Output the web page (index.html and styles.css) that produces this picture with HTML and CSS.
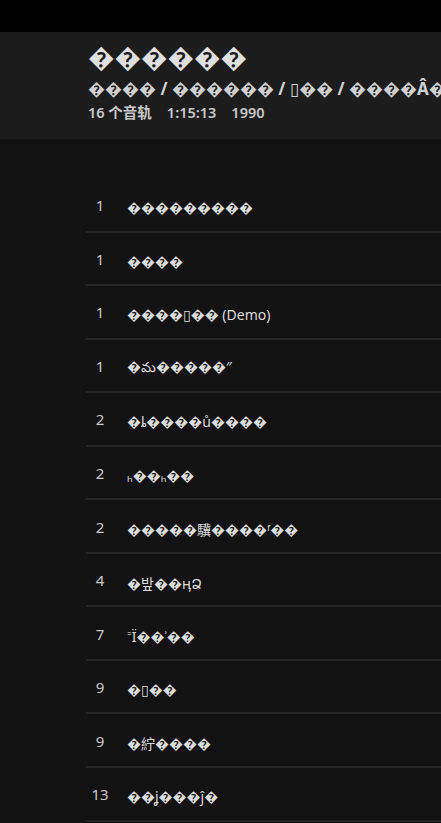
FILE: index.html
```html
<!DOCTYPE html>
<html>
	<head>
		<meta charset="utf-8">
		<title>album</title>
		<link rel="stylesheet" href="styles.css">
	</head>
	<body>
		<div class="topbar"></div>
		<div class="album-head">
			<h1 class="album-title">������</h1>
			<div class="album-artists">���� / ������ / ▯�� / ����Â���</div>
			<div class="album-meta">
				<span>16 个音轨</span>
				<span>1:15:13</span>
				<span>1990</span>
			</div>
		</div>
		<ul class="tracks">
			<li class="track"><span class="track-no">1</span><span class="track-name">���������</span></li>
			<li class="track"><span class="track-no">1</span><span class="track-name">����</span></li>
			<li class="track"><span class="track-no">1</span><span class="track-name">����▯�� (Demo)</span></li>
			<li class="track"><span class="track-no">1</span><span class="track-name">�మ�����″</span></li>
			<li class="track"><span class="track-no">2</span><span class="track-name">�ȴ����ů����</span></li>
			<li class="track"><span class="track-no">2</span><span class="track-name">ₕ��ₕ��</span></li>
			<li class="track"><span class="track-no">2</span><span class="track-name">�����驥����ᶠ��</span></li>
			<li class="track"><span class="track-no">4</span><span class="track-name">�밮��ӊՁ</span></li>
			<li class="track"><span class="track-no">7</span><span class="track-name">⁼Ï��ʾ��</span></li>
			<li class="track"><span class="track-no">9</span><span class="track-name">�▯��</span></li>
			<li class="track"><span class="track-no">9</span><span class="track-name">�紵����</span></li>
			<li class="track"><span class="track-no">13</span><span class="track-name">��ʝ���ĵ�</span></li>
		</ul>
	</body>
</html>
```

FILE: styles.css
```css
* {
	margin: 0;
	padding: 0;
	list-style: none;
}

body {
	background: #121212;
	color: #dcdcdc;
	font-family: "Noto Sans", "DejaVu Sans", "Noto Sans CJK SC", sans-serif;
	overflow: hidden;
}

.topbar {
	height: 32px;
	background: #000;
}

.album-head {
	height: 107px;
	box-sizing: border-box;
	background: #1c1c1c;
	padding: 7px 0 0 88px;
	white-space: nowrap;
	overflow: hidden;
}

.album-title {
	font-size: 26.5px;
	font-weight: bold;
	line-height: 36px;
	color: #e0e0e0;
}

.album-artists {
	font-size: 17px;
	font-weight: bold;
	line-height: 24px;
	margin-top: 2px;
	color: #d0d0d0;
}

.album-meta {
	display: flex;
	gap: 15px;
	font-size: 14.5px;
	font-weight: 600;
	line-height: 20px;
	margin-top: 1px;
	color: #c8c8c8;
}

.tracks {
	margin: 40px 0 0 86px;
}

.track {
	display: flex;
	align-items: center;
	height: 53.55px;
	box-sizing: border-box;
	border-bottom: 2px solid #242424;
	padding-top: 6px;
	white-space: nowrap;
}

.track-no {
	width: 28px;
	text-align: center;
	font-size: 15px;
	color: #c8c8c8;
	margin-top: -5px;
	margin-right: 13px;
}

.track-name {
	font-size: 14px;
	color: #dcdcdc;
}
```
